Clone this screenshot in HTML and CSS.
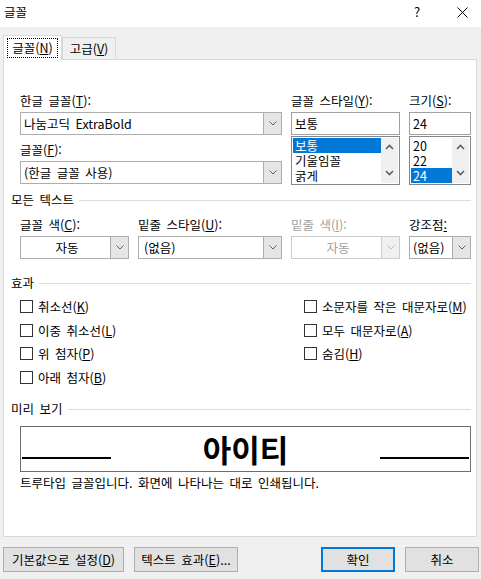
FILE: index.html
```html
<!DOCTYPE html>
<html lang="ko">
<head>
<meta charset="utf-8">
<title>글꼴</title>
<link rel="stylesheet" href="styles.css">
</head>
<body>
<div class="dialog">
  <div class="titlebar">
    <span class="title">글꼴</span>
    <span class="help">?</span>
    <svg class="close" width="11" height="11" viewBox="0 0 11 11"><path d="M0.5 0.5 10.5 10.5 M10.5 0.5 0.5 10.5" stroke="#000" stroke-width="1" fill="none"/></svg>
  </div>
  <div class="body">
    <div class="tabs">
      <div class="tab active"><span class="focus">글꼴(<u>N</u>)</span></div>
      <div class="tab">고급(<u>V</u>)</div>
    </div>
    <div class="panel">
      <div class="top">
        <div class="col">
          <div class="label">한글 글꼴(<u>T</u>):</div>
          <div class="combo edit"><span class="val">나눔고딕 ExtraBold</span><span class="drop"><svg width="8" height="5" viewBox="0 0 8 5"><path d="M0.5 0.5 4 4 7.5 0.5" fill="none" stroke="#606060"/></svg></span></div>
          <div class="label second">글꼴(<u>F</u>):</div>
          <div class="combo edit"><span class="val">(한글 글꼴 사용)</span><span class="drop"><svg width="8" height="5" viewBox="0 0 8 5"><path d="M0.5 0.5 4 4 7.5 0.5" fill="none" stroke="#606060"/></svg></span></div>
        </div>
        <div class="col">
          <div class="label">글꼴 스타일(<u>Y</u>):</div>
          <div class="textbox">보통</div>
          <div class="list">
            <div class="items">
              <div class="item sel">보통</div>
              <div class="item">기울임꼴</div>
              <div class="item">굵게</div>
            </div>
            <div class="scroll">
              <svg width="9" height="6" viewBox="0 0 9 6"><path d="M1 5 4.5 1.5 8 5" fill="none" stroke="#606060" stroke-width="1.6"/></svg>
              <svg width="9" height="6" viewBox="0 0 9 6"><path d="M1 1 4.5 4.5 8 1" fill="none" stroke="#606060" stroke-width="1.6"/></svg>
            </div>
          </div>
        </div>
        <div class="col">
          <div class="label">크기(<u>S</u>):</div>
          <div class="textbox">24</div>
          <div class="list">
            <div class="items">
              <div class="item">20</div>
              <div class="item">22</div>
              <div class="item sel">24</div>
            </div>
            <div class="scroll">
              <svg width="9" height="6" viewBox="0 0 9 6"><path d="M1 5 4.5 1.5 8 5" fill="none" stroke="#606060" stroke-width="1.6"/></svg>
              <svg width="9" height="6" viewBox="0 0 9 6"><path d="M1 1 4.5 4.5 8 1" fill="none" stroke="#606060" stroke-width="1.6"/></svg>
            </div>
          </div>
        </div>
      </div>

      <div class="group g-all"><span>모든 텍스트</span><span class="rule"></span></div>
      <div class="row2">
        <div class="col">
          <div class="label">글꼴 색(<u>C</u>):</div>
          <div class="combo pick"><span class="val center">자동</span><span class="drop"><svg width="8" height="5" viewBox="0 0 8 5"><path d="M0.5 0.5 4 4 7.5 0.5" fill="none" stroke="#606060"/></svg></span></div>
        </div>
        <div class="col">
          <div class="label">밑줄 스타일(<u>U</u>):</div>
          <div class="combo pick"><span class="val wide">(없음)</span><span class="drop"><svg width="8" height="5" viewBox="0 0 8 5"><path d="M0.5 0.5 4 4 7.5 0.5" fill="none" stroke="#606060"/></svg></span></div>
        </div>
        <div class="col">
          <div class="label disabled">밑줄 색(<u>I</u>):</div>
          <div class="combo pick off"><span class="val center">자동</span><span class="drop"><svg width="8" height="5" viewBox="0 0 8 5"><path d="M0.5 0.5 4 4 7.5 0.5" fill="none" stroke="#bcbcbc"/></svg></span></div>
        </div>
        <div class="col">
          <div class="label">강조점<u>:</u></div>
          <div class="combo pick"><span class="val">(없음)</span><span class="drop"><svg width="8" height="5" viewBox="0 0 8 5"><path d="M0.5 0.5 4 4 7.5 0.5" fill="none" stroke="#606060"/></svg></span></div>
        </div>
      </div>

      <div class="group g-fx"><span>효과</span><span class="rule"></span></div>
      <div class="checks">
        <div class="check"><span class="box"></span>취소선(<u>K</u>)</div>
        <div class="check"><span class="box"></span>이중 취소선(<u>L</u>)</div>
        <div class="check"><span class="box"></span>위 첨자(<u>P</u>)</div>
        <div class="check"><span class="box"></span>아래 첨자(<u>B</u>)</div>
        <div class="check"><span class="box"></span>소문자를 작은 대문자로(<u>M</u>)</div>
        <div class="check"><span class="box"></span>모두 대문자로(<u>A</u>)</div>
        <div class="check"><span class="box"></span>숨김(<u>H</u>)</div>
      </div>

      <div class="group g-prev"><span>미리 보기</span><span class="rule"></span></div>
      <div class="preview">
        <span class="pline"></span>
        <span class="ptext">아이티</span>
        <span class="pline"></span>
      </div>
      <div class="note">트루타입 글꼴입니다. 화면에 나타나는 대로 인쇄됩니다.</div>
    </div>
    <div class="buttons">
      <button class="btn b-default">기본값으로 설정(<u>D</u>)</button>
      <button class="btn b-effect">텍스트 효과(<u>E</u>)...</button>
      <button class="btn b-ok">확인</button>
      <button class="btn b-cancel">취소</button>
    </div>
  </div>
</div>
</body>
</html>
```
FILE: styles.css
```css
* { box-sizing: border-box; }
html, body { margin: 0; padding: 0; }
body {
  font-family: "Noto Sans CJK KR", "Noto Sans", sans-serif;
  font-size: 12.5px;
  word-spacing: 2px;
  color: #000;
  background: #f0f0f0;
}
u { text-decoration: underline; text-underline-offset: 1px; }

.dialog { width: 481px; height: 579px; background: #f0f0f0; overflow: hidden; }

.titlebar {
  height: 27px;
  background: #fff;
  display: flex;
  align-items: center;
  padding: 0 0 3px 4px;
}
.title { flex: 1; line-height: 16px; }
.help { width: 20px; text-align: center; font-size: 13px; line-height: 16px; }
.close { margin-left: 30px; margin-right: 13px; }

.body { padding: 8px 2px 0 3px; }

.tabs { display: flex; align-items: flex-end; height: 24px; }
.tab {
  border: 1px solid #d9d9d9;
  border-bottom: none;
  background: #f0f0f0;
  height: 22px;
  width: 54px;
  display: flex;
  align-items: center;
  justify-content: center;
  line-height: 16px;
}
.tab.active {
  width: 59px;
  height: 25px;
  margin-bottom: -1px;
  background: #fff;
  position: relative;
  z-index: 1;
  align-items: flex-start;
  padding-top: 2px;
}
.focus {
  display: flex;
  align-items: center;
  justify-content: center;
  width: 51px;
  height: 20px;
  border: 1px dotted #000;
}

.panel {
  border: 1px solid #d9d9d9;
  background: #fff;
  height: 478px;
  width: 474px;
  padding: 33px 5px 0 16px;
}

.label { height: 16px; line-height: 16px; margin-bottom: 3px; white-space: nowrap; }
.label.second { margin-top: 7px; }
.label.disabled { color: #a0a0a0; }

.top {
  display: grid;
  grid-template-columns: 262px 109px 62px;
  column-gap: 9px;
}
.col { display: flex; flex-direction: column; }

.combo {
  height: 23px;
  border: 1px solid #adadad;
  background: #fff;
  display: flex;
  align-items: stretch;
}
.combo .val {
  flex: 1;
  display: flex;
  align-items: center;
  padding-left: 3px;
  white-space: nowrap;
  overflow: hidden;
}
.combo .val.center { justify-content: center; }
.combo .val.wide { padding-left: 5px; }
.combo .drop {
  width: 18px;
  background: #e5e5e5;
  border-left: 1px solid #adadad;
  display: flex;
  align-items: center;
  justify-content: center;
}
.combo.off { border-color: #cccccc; color: #a0a0a0; }
.combo.off .drop { background: #f0f0f0; border-left-color: #cccccc; }

.textbox {
  height: 23px;
  border: 1px solid #a0a0a0;
  background: #fff;
  display: flex;
  align-items: center;
  padding-left: 3px;
}
.list {
  margin-top: 1px;
  height: 49px;
  border: 1px solid #828790;
  background: #fff;
  padding: 1px;
  display: flex;
  overflow: hidden;
}
.items { flex: 1; min-width: 0; }
.item { height: 15px; line-height: 15px; padding-left: 2px; white-space: nowrap; }
.item.sel { background: #0078d7; color: #fff; }
.scroll {
  width: 17px;
  background: #f0f0f0;
  display: flex;
  flex-direction: column;
  align-items: center;
  justify-content: space-between;
  padding: 6px 0 7px;
}
.scroll svg { display: block; }

.group {
  display: flex;
  align-items: center;
  gap: 5px;
  height: 16px;
  line-height: 16px;
  margin-left: -9px;
}
.group .rule { flex: 1; border-top: 1px solid #dcdcdc; }
.g-all { margin-top: 7px; }
.g-fx { margin-top: 16px; }
.g-prev { margin-top: 12px; }

.row2 {
  margin-top: 9px;
  display: grid;
  grid-template-columns: 109px 144px 109px 62px;
  column-gap: 9px;
}

.checks {
  margin-top: 4px;
  display: grid;
  grid-template-columns: 284px 1fr;
  grid-template-rows: repeat(4, 23.5px);
  grid-auto-flow: column;
}
.check { display: flex; align-items: center; white-space: nowrap; }
.box {
  width: 13px;
  height: 13px;
  border: 1px solid #333;
  background: #fff;
  margin-right: 5px;
  flex: none;
}

.preview {
  margin-top: 9px;
  height: 46px;
  border: 1px solid #6e6e6e;
  display: flex;
  align-items: center;
  padding: 0 1px;
}
.pline {
  width: 89px;
  align-self: flex-start;
  margin-top: 30px;
  border-top: 2px solid #000;
}
.ptext {
  flex: 1;
  text-align: center;
  font-size: 31px;
  font-weight: 700;
  line-height: 40px;
  word-spacing: normal;
}
.note { margin-top: 3px; line-height: 16px; }

.buttons { display: flex; margin-top: 10px; }
.btn {
  font: inherit;
  word-spacing: inherit;
  color: #000;
  height: 25px;
  border: 1px solid #adadad;
  background: #e1e1e1;
  padding: 0;
  margin: 0;
  display: flex;
  align-items: center;
  justify-content: center;
  white-space: nowrap;
}
.b-default { width: 121px; }
.b-effect { width: 104px; margin-left: 10px; }
.b-ok { width: 74px; margin-left: auto; border: 2px solid #0078d7; }
.b-cancel { width: 74px; margin-left: 10px; }
```
